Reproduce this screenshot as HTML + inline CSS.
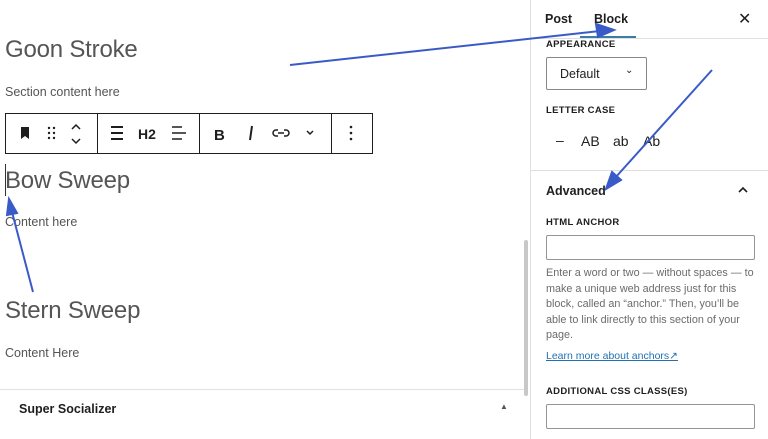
<!DOCTYPE html>
<html><head><style>
*{margin:0;padding:0;box-sizing:border-box}
body{width:768px;height:439px;overflow:hidden;background:#fff;font-family:"Liberation Sans",sans-serif;position:relative;color:#1e1e1e}
.a{position:absolute}
.h{font-weight:300;color:#555;font-size:24px;white-space:nowrap;letter-spacing:-0.2px}
.p{font-size:12.5px;color:#555}
.lbl{font-size:9.5px;font-weight:bold;letter-spacing:.3px;color:#1e1e1e}
.tb{position:absolute;left:5px;top:113px;width:368px;height:41px;border:1px solid #1e1e1e;display:flex}
.tb div{border-right:1px solid #1e1e1e;height:100%;position:relative}
</style></head><body>
<div class="a h" style="left:5px;top:36px">Goon Stroke</div>
<div class="a p" style="left:5px;top:85px">Section content here</div>
<div class="tb">
 <div style="width:92px"></div>
 <div style="width:102px"></div>
 <div style="width:132px"></div>
 <div style="border:none;flex:1"></div>
</div>
<svg class="a" style="left:0;top:113px" width="380" height="42">
 <path d="M21 14h8v12l-4-3-4 3z" fill="#1e1e1e"/>
 <g fill="#1e1e1e"><circle cx="49" cy="15" r="1.2"/><circle cx="54" cy="15" r="1.2"/><circle cx="49" cy="20" r="1.2"/><circle cx="54" cy="20" r="1.2"/><circle cx="49" cy="25" r="1.2"/><circle cx="54" cy="25" r="1.2"/></g>
 <path d="M72 16l4-4 4 4M72 26l4 4 4-4" stroke="#1e1e1e" stroke-width="1.5" fill="none"/>
 <path d="M111 14h12M111 20h12M111 26h12" stroke="#1e1e1e" stroke-width="2"/>
 <text x="138" y="26" font-family="Liberation Sans" font-weight="bold" font-size="14" fill="#1e1e1e">H2</text>
 <path d="M172 14h10M172 20h14M172 26h10" stroke="#1e1e1e" stroke-width="1.5"/>
 <text x="214" y="27" font-family="Liberation Sans" font-weight="bold" font-size="15" fill="#1e1e1e">B</text>
 <path d="M252 13l-2 14" stroke="#1e1e1e" stroke-width="2"/>
 <path d="M278 17h-2a3 3 0 0 0 0 6h2M284 17h2a3 3 0 0 1 0 6h-2M278 20h6" stroke="#1e1e1e" stroke-width="1.5" fill="none"/>
 <path d="M307 18l3 3 3-3" stroke="#1e1e1e" stroke-width="1.5" fill="none"/>
 <g fill="#1e1e1e"><circle cx="351" cy="14" r="1.3"/><circle cx="351" cy="20" r="1.3"/><circle cx="351" cy="26" r="1.3"/></g>
</svg>
<div class="a" style="left:5px;top:164px;width:1px;height:32px;background:#333"></div>
<div class="a h" style="left:5px;top:167px">Bow Sweep</div>
<div class="a p" style="left:5px;top:215px">Content here</div>
<div class="a h" style="left:5px;top:297px">Stern Sweep</div>
<div class="a p" style="left:5px;top:346px">Content Here</div>
<div class="a" style="left:0;top:389px;width:524px;height:1px;background:#e2e2e2"></div>
<div class="a" style="left:19px;top:402px;font-size:12.5px;font-weight:bold">Super Socializer</div>
<div class="a" style="left:500px;top:402px;font-size:8px;color:#555">▲</div>
<div class="a" style="left:524px;top:240px;width:4px;height:156px;background:#c8c8c8;border-radius:2px"></div>
<div class="a" style="left:530px;top:0;width:1px;height:439px;background:#e0e0e0"></div>
<!-- sidebar -->
<div class="a" style="left:545px;top:12px;font-size:12.5px;font-weight:bold">Post</div>
<div class="a" style="left:594px;top:12px;font-size:12.5px;font-weight:bold">Block</div>
<div class="a" style="left:580px;top:36px;width:56px;height:2px;background:#3a7ca5"></div>
<div class="a" style="left:531px;top:38px;width:237px;height:1px;background:#e0e0e0"></div>
<div class="a" style="left:738px;top:9px;font-size:16px">✕</div>
<div class="a lbl" style="left:546px;top:39px">APPEARANCE</div>
<div class="a" style="left:546px;top:57px;width:101px;height:33px;border:1px solid #888;border-radius:2px;font-size:12.5px;padding:9px 0 0 13px">Default<span style="position:absolute;left:78px;top:7px;font-size:10px">⌄</span></div>
<div class="a lbl" style="left:546px;top:105px">LETTER CASE</div>
<div class="a" style="left:556px;top:132px;font-size:14px">–</div>
<div class="a" style="left:581px;top:133px;font-size:14px">AB</div>
<div class="a" style="left:613px;top:133px;font-size:14px">ab</div>
<div class="a" style="left:643px;top:133px;font-size:14px">Ab</div>
<div class="a" style="left:531px;top:170px;width:237px;height:1px;background:#e0e0e0"></div>
<div class="a" style="left:546px;top:184px;font-size:12.5px;font-weight:bold">Advanced</div>
<svg class="a" style="left:736px;top:184px" width="14" height="12"><path d="M3 8l4-4 4 4" stroke="#1e1e1e" stroke-width="1.6" fill="none"/></svg>
<div class="a lbl" style="left:546px;top:217px">HTML ANCHOR</div>
<div class="a" style="left:546px;top:235px;width:209px;height:25px;border:1px solid #949494;border-radius:2px"></div>
<div class="a" style="left:546px;top:266px;width:214px;font-size:10.8px;line-height:15.5px;color:#6b6b6b">Enter a word or two — without spaces — to make a unique web address just for this block, called an “anchor.” Then, you’ll be able to link directly to this section of your page.</div>
<div class="a" style="left:546px;top:350px;font-size:10.5px;color:#2271b1;text-decoration:underline">Learn more about anchors↗</div>
<div class="a lbl" style="left:546px;top:386px">ADDITIONAL CSS CLASS(ES)</div>
<div class="a" style="left:546px;top:404px;width:209px;height:25px;border:1px solid #949494;border-radius:2px"></div>
<!-- arrows -->
<svg class="a" style="left:0;top:0" width="768" height="439">
 <g stroke="#3a5bc7" stroke-width="2" fill="#3a5bc7">
  <line x1="290" y1="65" x2="600" y2="31"/>
  <path d="M614 30l-18-6 2 13z"/>
  <line x1="712" y1="70" x2="615" y2="178"/>
  <path d="M606 189l6-17 9 8z"/>
  <line x1="33" y1="292" x2="12" y2="212"/>
  <path d="M9 199l-2 16 10-2z"/>
 </g>
</svg>
</body></html>
